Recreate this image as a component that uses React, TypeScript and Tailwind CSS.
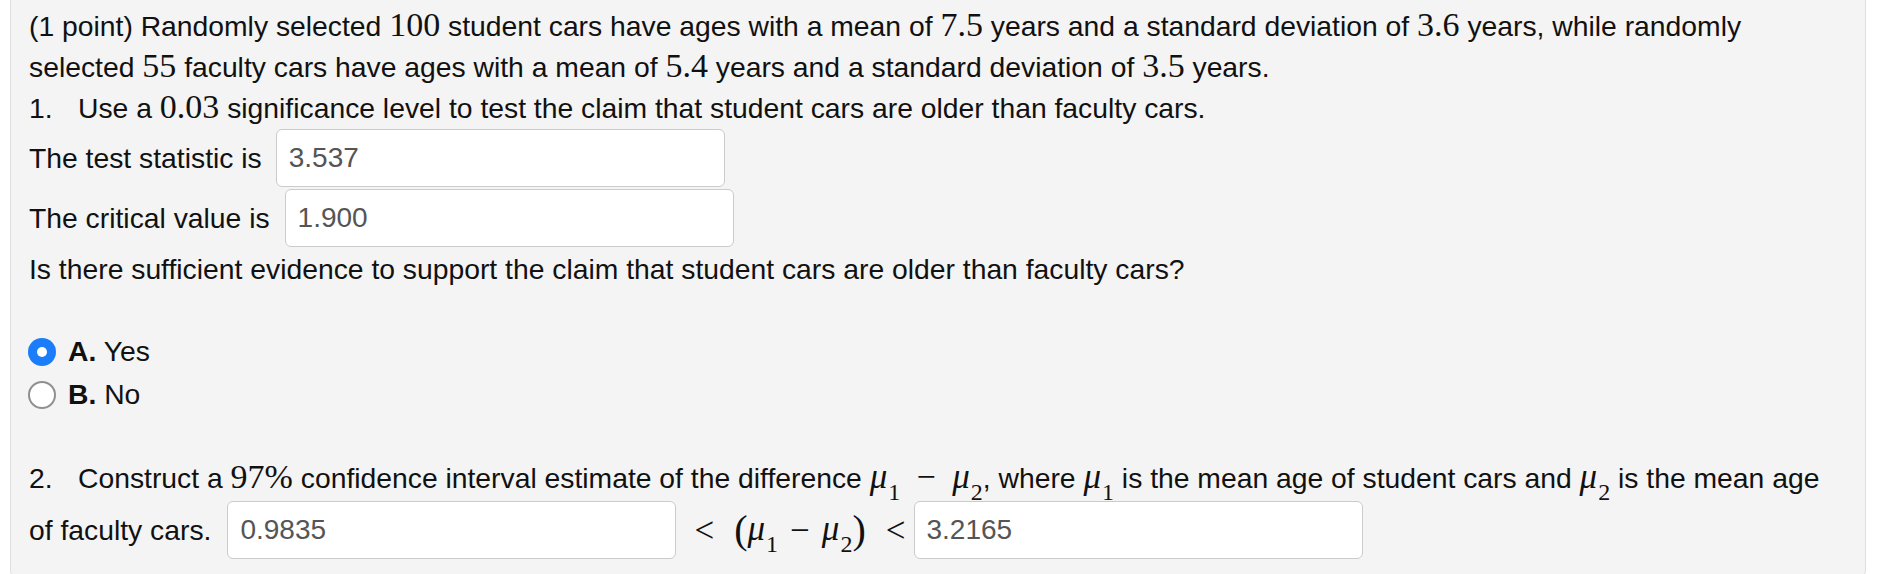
import React from "react";

const serif = "font-['Liberation_Serif',serif]";

function M({ children }: { children: React.ReactNode }) {
  return <span className={`${serif} text-[34px] leading-none`}>{children}</span>;
}

function Mu({ sub }: { sub: string }) {
  return (
    <span className={`${serif} text-[35px] leading-none`}>
      <i>μ</i>
      <sub className={`${serif} ml-[1px] text-[24px] leading-none align-[-6px]`}>{sub}</sub>
    </span>
  );
}

function Answer({ value, className = "" }: { value: string; className?: string }) {
  return (
    <input
      readOnly
      value={value}
      className={`h-[58px] w-[449px] rounded-[6px] border border-[#cbcbcb] bg-white px-[12px] text-[28px] text-[#555] outline-none ${className}`}
    />
  );
}

function Radio({ checked }: { checked?: boolean }) {
  if (checked) {
    return (
      <span className="flex h-[28px] w-[28px] items-center justify-center rounded-full bg-[#1b7dfa]">
        <span className="h-[10px] w-[10px] rounded-full bg-white" />
      </span>
    );
  }
  return <span className="h-[28px] w-[28px] rounded-full border-2 border-[#8f8f8f] bg-white" />;
}

export default function App() {
  return (
    <div className="min-h-screen bg-white pl-[10px] pr-[11px] font-['Liberation_Sans',Arial,sans-serif]">
      <div className="rounded-b-[6px] border border-t-0 border-[#dedede] bg-[#f4f4f4] px-[18px] pt-[6px] pb-[17px] text-[28.3px] leading-[41px] text-[#111]">
        <div className="h-[41px] whitespace-nowrap">
          (1 point) Randomly selected <M>100</M> student cars have ages with a mean of <M>7.5</M> years and a
          standard deviation of <M>3.6</M> years, while randomly
        </div>
        <div className="h-[41px] whitespace-nowrap">
          selected <M>55</M> faculty cars have ages with a mean of <M>5.4</M> years and a standard deviation of{" "}
          <M>3.5</M> years.
        </div>
        <div className="h-[41px] whitespace-nowrap">
          <span className="inline-block w-[49px]">1.</span>Use a <M>0.03</M> significance level to test the claim
          that student cars are older than faculty cars.
        </div>

        <div className="flex h-[58px] items-center">
          <span>The test statistic is</span>
          <Answer value="3.537" className="ml-[14px]" />
        </div>
        <div className="mt-[2px] flex h-[58px] items-center">
          <span>The critical value is</span>
          <Answer value="1.900" className="ml-[15px]" />
        </div>
        <div className="mt-[2px] h-[41px]">
          Is there sufficient evidence to support the claim that student cars are older than faculty cars?
        </div>

        <div className="mt-[41px] flex h-[41px] items-center gap-[12px] -ml-[1px]">
          <Radio checked />
          <span>
            <b>A.</b> Yes
          </span>
        </div>
        <div className="mt-[2px] flex h-[41px] items-center gap-[12px] -ml-[1px]">
          <Radio />
          <span>
            <b>B.</b> No
          </span>
        </div>

        <div className="mt-[43px] h-[41px] whitespace-nowrap">
          <span className="inline-block w-[49px]">2.</span>Construct a <M>97%</M> confidence interval estimate of
          the difference <Mu sub="1" /> <M>&nbsp;−&nbsp;</M> <Mu sub="2" />, where <Mu sub="1" /> is the mean age
          of student cars and <Mu sub="2" /> is the mean age
        </div>
        <div className="mt-[2px] flex h-[58px] items-center">
          <span>of faculty cars.</span>
          <Answer value="0.9835" className="ml-[16px]" />
          <span className={`ml-[18px] mr-[8px] flex items-center gap-[20px] ${serif} text-[35px]`}>
            <span>&lt;</span>
            <span className="flex items-center">
              <span className="text-[40px] leading-none">(</span>
              <Mu sub="1" />
              <span className="mx-[12px]">−</span>
              <Mu sub="2" />
              <span className="text-[40px] leading-none">)</span>
            </span>
            <span>&lt;</span>
          </span>
          <Answer value="3.2165" />
        </div>
      </div>
    </div>
  );
}
